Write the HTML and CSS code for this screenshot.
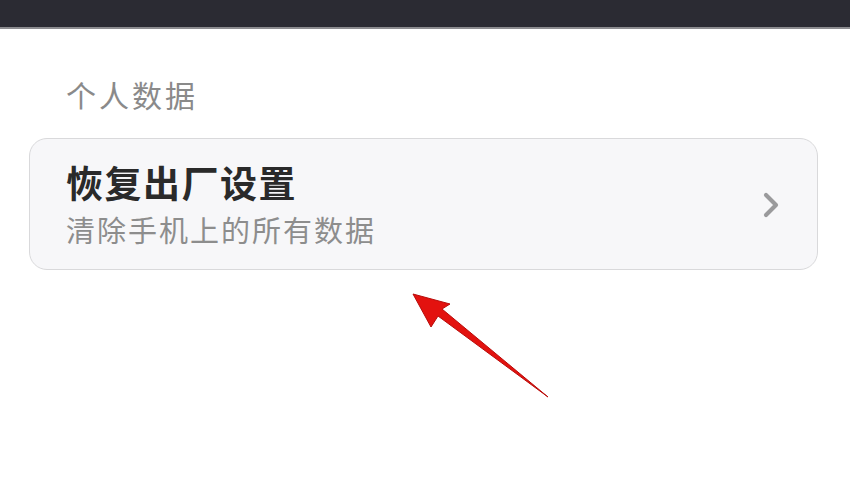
FILE: index.html
```html
<!DOCTYPE html>
<html lang="zh-CN">
<head>
<meta charset="utf-8">
<title>个人数据</title>
<link rel="stylesheet" href="styles.css">
</head>
<body>
<div class="topbar"></div>
<main class="content">
  <div class="section-title">个人数据</div>
  <div class="card">
    <div class="card-text">
      <div class="card-title">恢复出厂设置</div>
      <div class="card-sub">清除手机上的所有数据</div>
    </div>
    <svg class="chevron" width="20" height="28" viewBox="0 0 20 28">
      <path d="M5 4 L15 14 L5 24" fill="none" stroke="#9a9a9c" stroke-width="4.2" stroke-linecap="round" stroke-linejoin="round"/>
    </svg>
  </div>
</main>
<svg class="arrow" width="160" height="120" viewBox="0 0 160 120">
  <path d="M3 4 L40 14 L32 19 L138 107 L28 26 L21 37 Z" fill="#e3120f" stroke="#b80c0a" stroke-width="1" stroke-linejoin="round"/>
</svg>
</body>
</html>
```
FILE: styles.css
```css
html, body {
  margin: 0;
  padding: 0;
  background: #ffffff;
  font-family: "Noto Sans CJK SC", "Noto Sans", sans-serif;
}
body {
  position: relative;
  width: 850px;
  height: 478px;
  overflow: hidden;
}
.topbar {
  height: 27px;
  background: #2b2b33;
  border-bottom: 2px solid #8c8c90;
}
.content {
  padding: 0 32px 0 29px;
}
.section-title {
  margin-top: 45px;
  padding-left: 37px;
  font-size: 30px;
  line-height: 40px;
  color: #8a8a8a;
  letter-spacing: 3px;
}
.card {
  margin-top: 24px;
  height: 132px;
  box-sizing: border-box;
  border: 1.5px solid #d9d9db;
  border-radius: 18px;
  background: #f7f7f9;
  display: flex;
  align-items: center;
  padding: 0 36px 0 36px;
}
.card-text {
  flex: 1;
  display: flex;
  flex-direction: column;
  gap: 6px;
}
.card-title {
  font-size: 37px;
  line-height: 44px;
  height: 44px;
  font-weight: 700;
  color: #2a2a2a;
  letter-spacing: 1.5px;
}
.card-sub {
  font-size: 29px;
  line-height: 38px;
  height: 38px;
  color: #8d8d8d;
  letter-spacing: 2px;
}
.chevron {
  display: block;
  margin-top: 2px;
}
.arrow {
  position: absolute;
  left: 410px;
  top: 290px;
}
```
